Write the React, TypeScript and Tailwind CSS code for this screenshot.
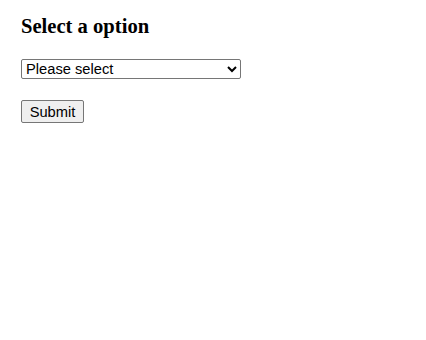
import React from "react";

export default function App() {
  return (
    <div className="min-h-[340px] bg-white px-[21px] pt-[15px] text-black" style={{ fontFamily: '"Liberation Sans", Arial, sans-serif' }}>
      <h3 className="text-[20.6px] font-bold leading-[normal] font-['Liberation_Serif',serif]">Select a option</h3>
      <div className="mt-[21px] flex">
        <select className="h-[20px] w-[220px] rounded-[2px] border border-[#767676] bg-white text-[14.7px] leading-[normal] text-black pl-0">
          <option>Please select</option>
        </select>
      </div>
      <div className="mt-[21px] flex">
        <button className="h-[23px] w-[63px] rounded-[2px] border border-[#767676] bg-[#efefef] px-0 text-[14.7px] leading-[normal] text-black">Submit</button>
      </div>
    </div>
  );
}
